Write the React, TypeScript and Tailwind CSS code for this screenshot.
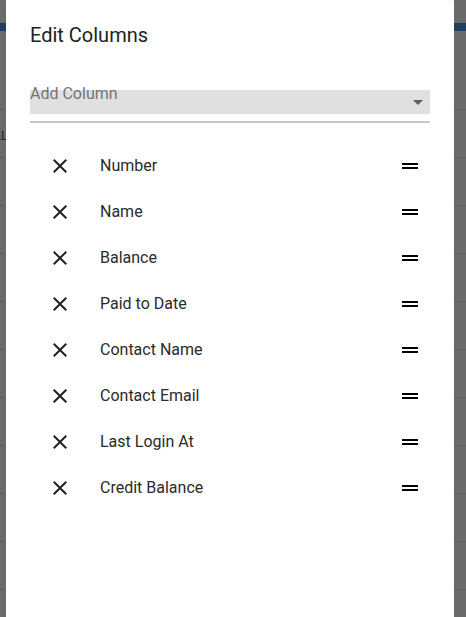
import React from "react";

const columns = [
  "Number",
  "Name",
  "Balance",
  "Paid to Date",
  "Contact Name",
  "Contact Email",
  "Last Login At",
  "Credit Balance",
];

function CloseIcon() {
  return (
    <svg width="24" height="24" viewBox="0 0 24 24" fill="#212121">
      <path d="M19 6.41L17.59 5 12 10.59 6.41 5 5 6.41 10.59 12 5 17.59 6.41 19 12 13.41 17.59 19 19 17.59 13.41 12z" />
    </svg>
  );
}

function DragIcon() {
  return (
    <svg width="24" height="24" viewBox="0 0 24 24" fill="#000">
      <path d="M20 9H4v2h16V9zM4 15h16v-2H4v2z" />
    </svg>
  );
}

export default function App() {
  return (
    <div
      className="relative w-[466px] h-[617px] overflow-hidden bg-[#6b6b6b]"
      style={{ fontFamily: "Roboto, 'Liberation Sans', sans-serif" }}
    >
      {/* page behind the backdrop */}
      <div className="flex flex-col">
        <div className="h-[23px]" />
        <div className="h-[8px] bg-[#1e3f63]" />
        <div className="h-[79px] border-b border-[#5c5c5c]" />
        <div className="h-[48px] border-b border-[#5c5c5c] flex items-center">
          <span className="text-[13px] text-[#222] -ml-[6px] mt-[4px]">LL</span>
        </div>
        {Array.from({ length: 9 }).map((_, i) => (
          <div key={i} className="h-[48px] border-b border-[#5c5c5c]" />
        ))}
      </div>

      {/* dialog */}
      <div className="absolute left-[6px] top-[-2px] w-[448px] h-[640px] bg-white rounded-[4px] pl-[24px] pr-[32px]">
        <div className="pt-[21px] text-[20px] leading-[32px] text-[#212121]">Edit Columns</div>

        <div className="relative mt-[39px] mr-[-8px]">
          <div className="h-[24px] bg-[#e0e0e0] relative">
            <svg
              className="absolute right-[0px] top-[0px]"
              width="24"
              height="24"
              viewBox="0 0 24 24"
              fill="#5f5f5f"
            >
              <path d="M7 10l5 5 5-5z" />
            </svg>
          </div>
          <span className="absolute left-0 top-[-6px] text-[16px] leading-[20px] text-[#757575]">
            Add Column
          </span>
          <div className="mt-[7px] h-[2px] bg-[#c8c8c8]" />
        </div>

        <div className="mt-[20px] flex flex-col">
          {columns.map((c) => (
            <div key={c} className="h-[46px] flex items-center">
              <div className="ml-[18px] w-[24px] h-[24px]">
                <CloseIcon />
              </div>
              <span className="ml-[28px] flex-1 text-[16px] text-[#2a2a2a]">{c}</span>
              <DragIcon />
            </div>
          ))}
        </div>
      </div>
    </div>
  );
}
